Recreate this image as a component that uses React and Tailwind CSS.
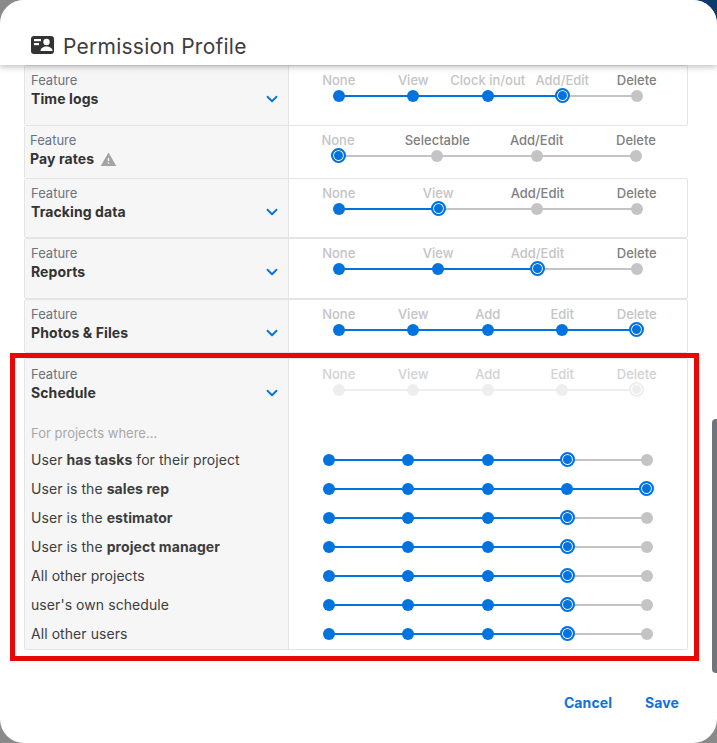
import { ChevronDown } from 'lucide-react'

const BLUE = '#0073de'

function Stop({ label, state, disabled }) {
  // state: on | current | off
  const labelColor = disabled
    ? 'text-[#d2d2d2]'
    : state === 'off'
      ? 'text-[#808080]'
      : 'text-[#c4c4c4]'

  let dot = 'w-3 h-3 bg-[#c4c4c4]'
  if (disabled) {
    dot = state === 'current'
      ? 'w-[15px] h-[15px] bg-[#eeeeee] border-2 border-[#eeeeee] shadow-[inset_0_0_0_1px_#ffffff]'
      : 'w-3 h-3 bg-[#eeeeee]'
  } else if (state === 'on') {
    dot = 'w-3 h-3 bg-[#0073de]'
  } else if (state === 'current') {
    dot = 'w-[15px] h-[15px] bg-[#0073de] border-2 border-[#0073de] shadow-[inset_0_0_0_1px_#ffffff]'
  }

  return (
    <div className="w-[14px] flex flex-col items-center">
      {label && (
        <div className={`h-[17px] leading-[18px] whitespace-nowrap text-[13px] font-medium ${labelColor}`}>
          {label}
        </div>
      )}
      <div className="h-[15px] flex items-center justify-center">
        <div className={`rounded-full box-border shrink-0 ${dot}`} />
      </div>
    </div>
  )
}

function Slider({ stops, value, disabled, wide }) {
  const hasLabels = Array.isArray(stops)
  const names = hasLabels ? stops : Array.from({ length: stops }).map(() => null)
  const pct = (value / (names.length - 1)) * 100

  return (
    <div className={`relative flex justify-between ${wide ? 'w-[332px]' : 'w-[312px]'}`}>
      <div className="absolute left-[7px] right-[7px] bottom-[6px] h-[2px]">
        <div className={`absolute inset-0 ${disabled ? 'bg-[#eeeeee]' : 'bg-[#c4c4c4]'}`} />
        {!disabled && (
          <div className="absolute left-0 top-0 bottom-0" style={{ width: `${pct}%`, background: BLUE }} />
        )}
      </div>
      {names.map((n, i) => (
        <div key={i} className="relative">
          <Stop
            label={n}
            disabled={disabled}
            state={i < value ? 'on' : i === value ? 'current' : 'off'}
          />
        </div>
      ))}
    </div>
  )
}

function FeatureLabel({ name, warning }) {
  return (
    <div>
      <div className="text-[13px] leading-[18px] text-[#6b7280]">Feature</div>
      <div className="flex items-center gap-[6px] mt-[1px] text-[14px] leading-[18px] font-bold tracking-[0.1px] text-[#333333]">
        {name}
        {warning && (
          <svg width="17" height="17" viewBox="0 0 24 24" fill="#a3a3a3">
            <path d="M1 21h22L12 2 1 21zm12-3h-2v-2h2v2zm0-4h-2v-4h2v4z" />
          </svg>
        )}
      </div>
    </div>
  )
}

function FeatureRow({ name, stops, value, height, warning, plain }) {
  return (
    <div
      className={`flex ${height} ${
        plain ? '' : 'border border-[#e4e4e4] rounded-[2px]'
      }`}
    >
      <div
        className={`shrink-0 bg-[#f6f6f6] border-r border-[#e4e4e4] pt-[5px] pl-[6px] pr-[7px] flex justify-between items-start ${
          plain ? 'w-[265px] shadow-[inset_1px_0_0_#e4e4e4]' : 'w-[264px]'
        }`}
      >
        <FeatureLabel name={name} warning={warning} />
        {!plain && <ChevronDown size={18} strokeWidth={2.4} color={BLUE} className="mt-[19px]" />}
      </div>
      <div className={`flex-1 pt-[5px] ${plain ? 'pl-[42px]' : 'pl-[42.75px]'}`}>
        <Slider stops={stops} value={value} />
      </div>
    </div>
  )
}

const scheduleRows = [
  { text: <>User <b>has tasks</b> for their project</>, value: 3 },
  { text: <>User is the <b>sales rep</b></>, value: 4 },
  { text: <>User is the <b>estimator</b></>, value: 3 },
  { text: <>User is the <b>project manager</b></>, value: 3 },
  { text: 'All other projects', value: 3 },
  { text: "user's own schedule", value: 3 },
  { text: 'All other users', value: 3 },
]

export default function App() {
  return (
    <div
      className="relative w-[717px] h-[743px] overflow-hidden bg-[#8a8a8a]"
      style={{ fontFamily: 'Inter, "Liberation Sans", sans-serif' }}
    >
      {/* backdrop behind the top right corner */}
      <div className="absolute right-0 top-0 w-8 h-8 bg-[#0b3a6b]" />

      <div className="relative h-full bg-white rounded-[24px] flex flex-col overflow-hidden">
        <div className="relative z-10 h-[65px] shrink-0 bg-white flex items-end pb-[3px] pl-[31px] gap-[9px] shadow-[0_2px_6px_rgba(0,0,0,0.25)]">
          <svg width="23" height="18" viewBox="0 0 23 18" className="mb-[8px]">
            <rect width="23" height="18" rx="3" fill="#333333" />
            <rect x="3" y="3" width="7" height="2.2" fill="#ffffff" />
            <rect x="3" y="7" width="5" height="2.2" fill="#ffffff" />
            <circle cx="15.5" cy="6" r="3.2" fill="#ffffff" />
            <path d="M9.5 15c0-3 3-4.5 6-4.5s6 1.500 6 4.500z" fill="#ffffff" />
          </svg>
          <h1 className="text-[21px] leading-[30px] tracking-[0.25px] text-[#3d3d3d]">Permission Profile</h1>
        </div>

        <div className="pl-[24px] pr-[29px]">
          <FeatureRow name="Time logs" stops={['None', 'View', 'Clock in/out', 'Add/Edit', 'Delete']} value={3} height="h-[61px]" />
          <FeatureRow name="Pay rates" stops={['None', 'Selectable', 'Add/Edit', 'Delete']} value={0} height="h-[52px]" warning plain />
          <FeatureRow name="Tracking data" stops={['None', 'View', 'Add/Edit', 'Delete']} value={1} height="h-[60px]" />
          <FeatureRow name="Reports" stops={['None', 'View', 'Add/Edit', 'Delete']} value={2} height="h-[61px]" />
          <FeatureRow name="Photos &amp; Files" stops={['None', 'View', 'Add', 'Edit', 'Delete']} value={4} height="h-[54px]" />

          {/* highlighted section */}
          <div className="-ml-[14px] -mr-[11px] border-[5px] border-[#e80808] pl-[9px] pr-[6px]">
            <div className="border border-[#e4e4e4] rounded-[2px] mb-[6px]">
              <div className="flex h-[62px]">
                <div className="w-[264px] shrink-0 bg-[#f6f6f6] border-r border-[#e4e4e4] pt-[6px] pl-[6px] pr-[7px] flex justify-between items-start">
                  <FeatureLabel name="Schedule" />
                  <ChevronDown size={18} strokeWidth={2.4} color={BLUE} className="mt-[19px]" />
                </div>
                <div className="flex-1 pt-[6px] pl-[42.75px]">
                  <Slider stops={['None', 'View', 'Add', 'Edit', 'Delete']} value={4} disabled />
                </div>
              </div>
              <div className="flex h-[25px]">
                <div className="w-[264px] shrink-0 bg-[#f6f6f6] border-r border-[#e4e4e4] pl-[6px] text-[13px] leading-[25px] text-[#a8a8a8]">
                  For projects where...
                </div>
              </div>
              {scheduleRows.map((r, i) => (
                <div key={i} className="flex h-[29px]">
                  <div className="w-[264px] shrink-0 bg-[#f6f6f6] border-r border-[#e4e4e4] pl-[6px] text-[14px] leading-[27px] tracking-[0.07px] text-[#3d3d3d]">
                    {r.text}
                  </div>
                  <div className="flex-1 pl-[32.75px] pb-[2px] flex items-center">
                    <Slider stops={5} value={r.value} wide />
                  </div>
                </div>
              ))}
            </div>
          </div>
        </div>

        <div className="flex-1 flex justify-end items-center gap-[33px] pr-[38px]">
          <button className="text-[14px] font-bold tracking-[0.1px] text-[#0b73d9]">Cancel</button>
          <button className="text-[14px] font-bold tracking-[0.1px] text-[#0b73d9]">Save</button>
        </div>
      </div>

      {/* scrollbar thumb */}
      <div className="absolute right-0 top-[419px] w-[5px] h-[254px] bg-[#70747c] rounded-l-[4px]" />
    </div>
  )
}
